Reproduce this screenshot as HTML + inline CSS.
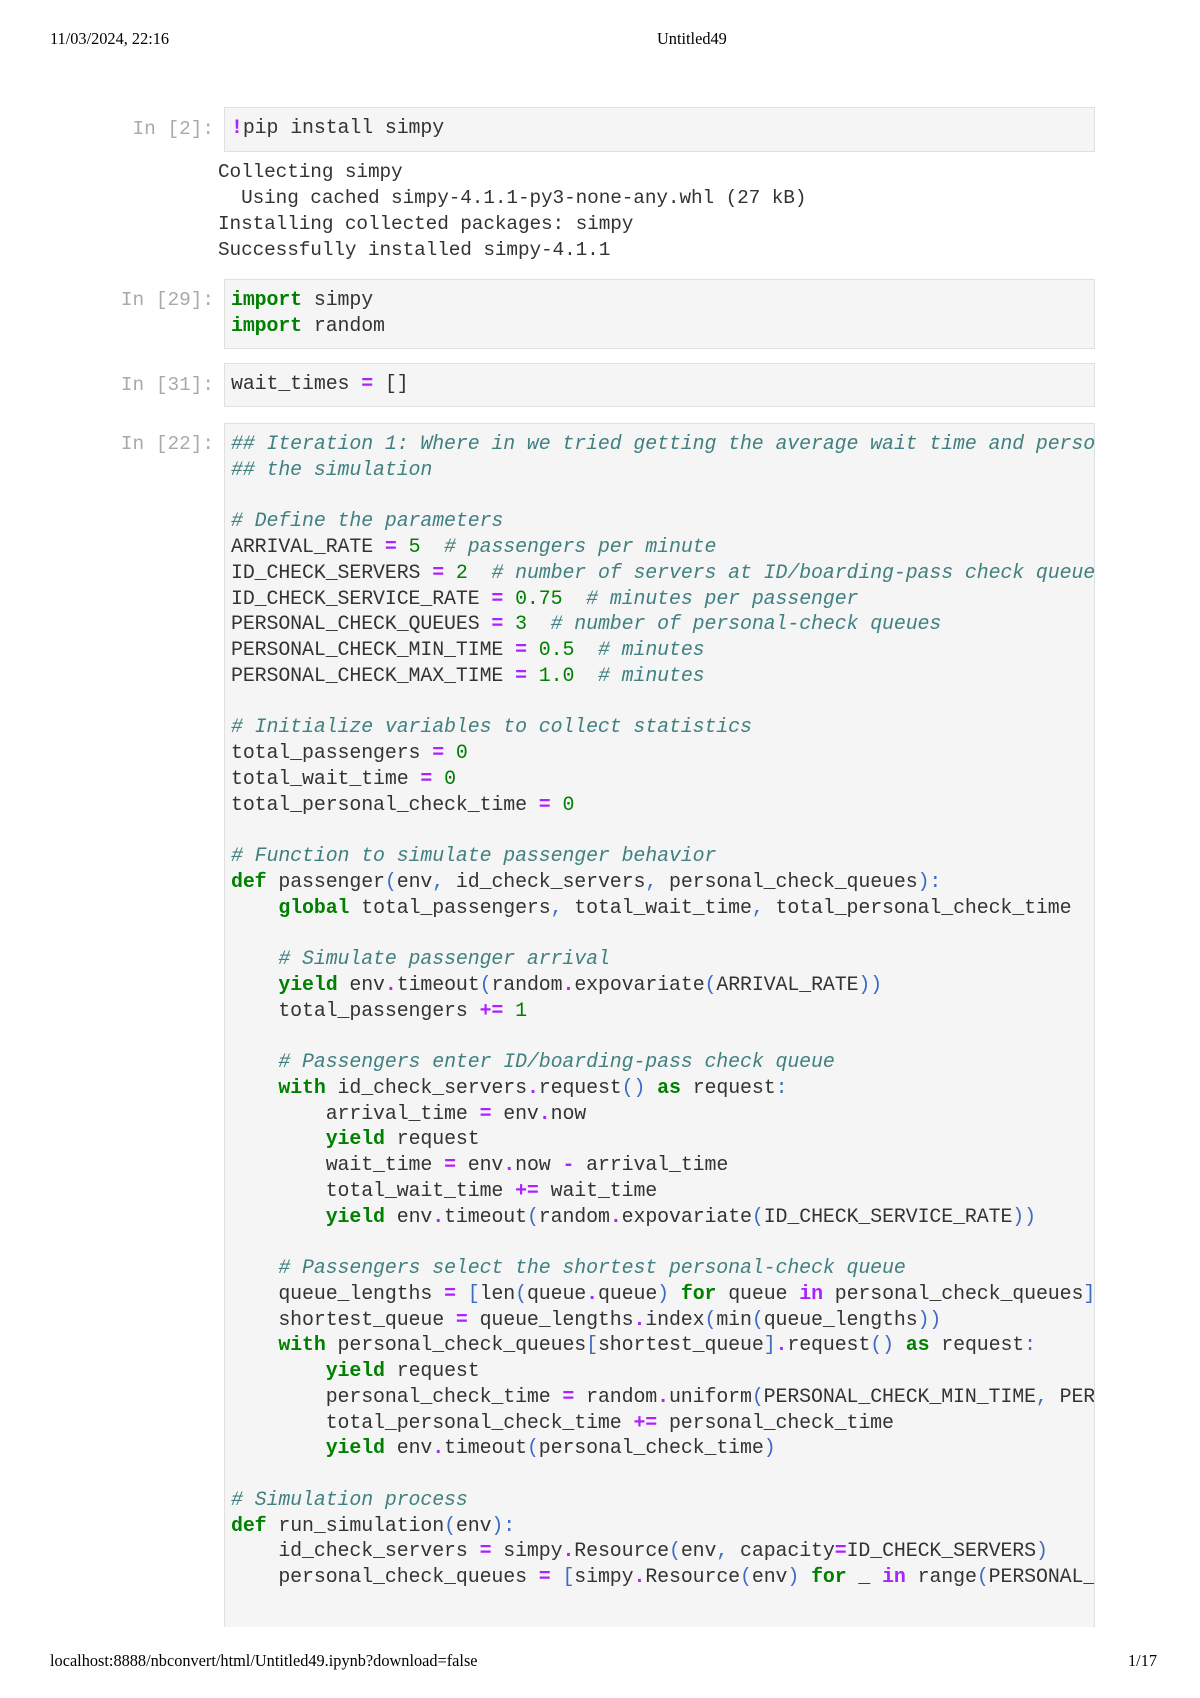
<!DOCTYPE html>
<html><head><meta charset="utf-8">
<style>
*{margin:0;padding:0;box-sizing:border-box}
body{width:1200px;height:1698px;background:#fff;position:relative;overflow:hidden;font-family:"Liberation Mono",monospace;}
.hdr{position:absolute;font-family:"Liberation Serif",serif;font-size:17px;color:#000;transform-origin:0 50%;white-space:nowrap;transform:scaleX(.96)}
.box{position:absolute;left:224px;width:871px;background:#f5f5f5;border:1px solid #e0e0e0;overflow:hidden;padding:7px 0 0 6px}
pre{font-family:"Liberation Mono",monospace;font-size:19.9px;line-height:25.75px;color:#333;white-space:pre;letter-spacing:-0.1px}
.p{position:absolute;right:986px;font-family:"Liberation Mono",monospace;font-size:19.4px;line-height:26px;color:#aaa;white-space:pre}
.c{color:#408080;font-style:italic}
.k{color:#008000;font-weight:bold}
.o{color:#AA22FF;font-weight:bold}
.n{color:#008000}
.b{color:#3b6bc4}
</style></head><body>
<div class="hdr" style="left:50px;top:29px">11/03/2024, 22:16</div>
<div class="hdr" style="left:657px;top:29px">Untitled49</div>

<div class="p" style="top:116px">In [2]:</div>
<div class="box" style="top:107px;height:45px"><pre><span class="o">!</span>pip install simpy</pre></div>

<pre style="position:absolute;left:218px;top:159px;font-size:19.4px;line-height:26px">Collecting simpy
  Using cached simpy-4.1.1-py3-none-any.whl (27 kB)
Installing collected packages: simpy
Successfully installed simpy-4.1.1</pre>

<div class="p" style="top:287px">In [29]:</div>
<div class="box" style="top:279px;height:70px"><pre><span class="k">import</span> simpy
<span class="k">import</span> random</pre></div>

<div class="p" style="top:372px">In [31]:</div>
<div class="box" style="top:363px;height:44px"><pre>wait_times <span class="o">=</span> []</pre></div>

<div class="p" style="top:431px">In [22]:</div>
<div class="box" style="top:423px;height:1204px;border-bottom:none"><pre><span class="c">## Iteration 1: Where in we tried getting the average wait time and personal check time of</span>
<span class="c">## the simulation</span>

<span class="c"># Define the parameters</span>
ARRIVAL_RATE <span class="o">=</span> <span class="n">5</span>  <span class="c"># passengers per minute</span>
ID_CHECK_SERVERS <span class="o">=</span> <span class="n">2</span>  <span class="c"># number of servers at ID/boarding-pass check queue</span>
ID_CHECK_SERVICE_RATE <span class="o">=</span> <span class="n">0.75</span>  <span class="c"># minutes per passenger</span>
PERSONAL_CHECK_QUEUES <span class="o">=</span> <span class="n">3</span>  <span class="c"># number of personal-check queues</span>
PERSONAL_CHECK_MIN_TIME <span class="o">=</span> <span class="n">0.5</span>  <span class="c"># minutes</span>
PERSONAL_CHECK_MAX_TIME <span class="o">=</span> <span class="n">1.0</span>  <span class="c"># minutes</span>

<span class="c"># Initialize variables to collect statistics</span>
total_passengers <span class="o">=</span> <span class="n">0</span>
total_wait_time <span class="o">=</span> <span class="n">0</span>
total_personal_check_time <span class="o">=</span> <span class="n">0</span>

<span class="c"># Function to simulate passenger behavior</span>
<span class="k">def</span> passenger<span class="b">(</span>env<span class="b">,</span> id_check_servers<span class="b">,</span> personal_check_queues<span class="b">):</span>
    <span class="k">global</span> total_passengers<span class="b">,</span> total_wait_time<span class="b">,</span> total_personal_check_time

    <span class="c"># Simulate passenger arrival</span>
    <span class="k">yield</span> env<span class="o">.</span>timeout<span class="b">(</span>random<span class="o">.</span>expovariate<span class="b">(</span>ARRIVAL_RATE<span class="b">))</span>
    total_passengers <span class="o">+=</span> <span class="n">1</span>

    <span class="c"># Passengers enter ID/boarding-pass check queue</span>
    <span class="k">with</span> id_check_servers<span class="o">.</span>request<span class="b">()</span> <span class="k">as</span> request<span class="b">:</span>
        arrival_time <span class="o">=</span> env<span class="o">.</span>now
        <span class="k">yield</span> request
        wait_time <span class="o">=</span> env<span class="o">.</span>now <span class="o">-</span> arrival_time
        total_wait_time <span class="o">+=</span> wait_time
        <span class="k">yield</span> env<span class="o">.</span>timeout<span class="b">(</span>random<span class="o">.</span>expovariate<span class="b">(</span>ID_CHECK_SERVICE_RATE<span class="b">))</span>

    <span class="c"># Passengers select the shortest personal-check queue</span>
    queue_lengths <span class="o">=</span> <span class="b">[</span>len<span class="b">(</span>queue<span class="o">.</span>queue<span class="b">)</span> <span class="k">for</span> queue <span class="o">in</span> personal_check_queues<span class="b">]</span>
    shortest_queue <span class="o">=</span> queue_lengths<span class="o">.</span>index<span class="b">(</span>min<span class="b">(</span>queue_lengths<span class="b">))</span>
    <span class="k">with</span> personal_check_queues<span class="b">[</span>shortest_queue<span class="b">]</span><span class="o">.</span>request<span class="b">()</span> <span class="k">as</span> request<span class="b">:</span>
        <span class="k">yield</span> request
        personal_check_time <span class="o">=</span> random<span class="o">.</span>uniform<span class="b">(</span>PERSONAL_CHECK_MIN_TIME<span class="b">,</span> PERSONAL_CHECK_MAX_TIME<span class="b">)</span>
        total_personal_check_time <span class="o">+=</span> personal_check_time
        <span class="k">yield</span> env<span class="o">.</span>timeout<span class="b">(</span>personal_check_time<span class="b">)</span>

<span class="c"># Simulation process</span>
<span class="k">def</span> run_simulation<span class="b">(</span>env<span class="b">):</span>
    id_check_servers <span class="o">=</span> simpy<span class="o">.</span>Resource<span class="b">(</span>env<span class="b">,</span> capacity<span class="o">=</span>ID_CHECK_SERVERS<span class="b">)</span>
    personal_check_queues <span class="o">=</span> <span class="b">[</span>simpy<span class="o">.</span>Resource<span class="b">(</span>env<span class="b">)</span> <span class="k">for</span> _ <span class="o">in</span> range<span class="b">(</span>PERSONAL_CHECK_QUEUES<span class="b">)]</span></pre></div>

<div class="hdr" style="left:50px;top:1651px">localhost:8888/nbconvert/html/Untitled49.ipynb?download=false</div>
<div class="hdr" style="left:1128px;top:1651px">1/17</div>
</body></html>
